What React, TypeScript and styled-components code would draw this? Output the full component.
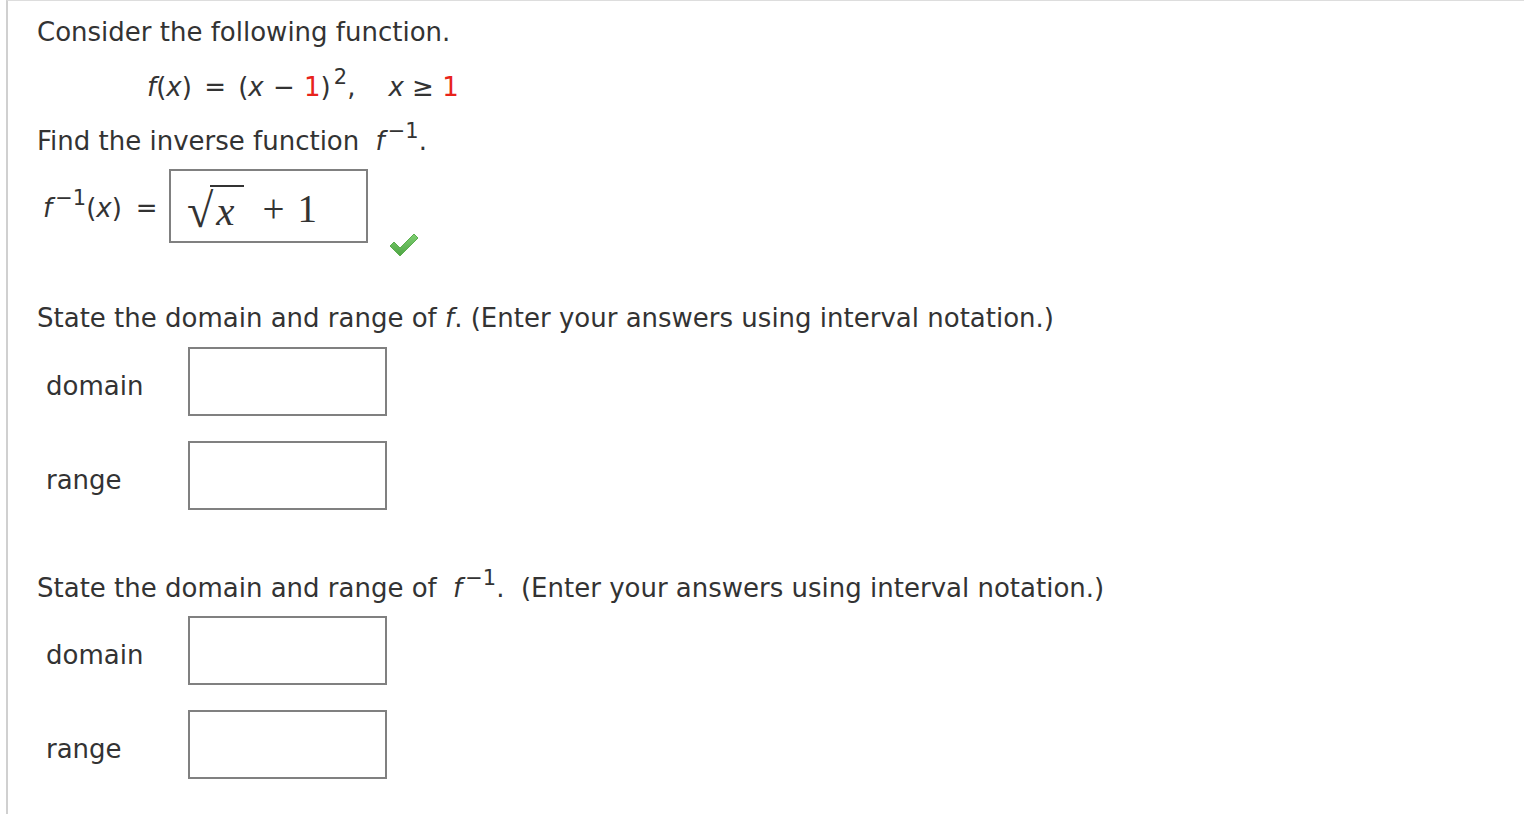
import React from 'react';
import styled, { createGlobalStyle } from 'styled-components';

const GlobalStyle = createGlobalStyle`
  html, body {
    margin: 0;
    padding: 0;
    background: #ffffff;
  }
  body {
    font-family: 'DejaVu Sans', Verdana, sans-serif;
    color: #333333;
  }
`;

const Frame = styled.div`
  margin-left: 6px;
  min-height: 814px;
  box-sizing: border-box;
  border-left: 2px solid #d0d0d0;
  border-top: 1px solid #dddddd;
  padding: 16px 0 0 29px;
`;

const Line = styled.div<{ $top?: number; $indent?: number }>`
  font-size: 26px;
  line-height: 30px;
  margin-top: ${(p) => p.$top ?? 0}px;
  padding-left: ${(p) => p.$indent ?? 0}px;
  white-space: nowrap;
`;

const It = styled.i`
  font-style: italic;
`;

const Red = styled.span`
  color: #e8231b;
`;

const Sup = styled.sup`
  font-size: 21px;
  line-height: 0;
  position: relative;
  top: -2px;
  margin-left: 3px;
  vertical-align: super;
`;

const Gap = styled.span<{ $w: number }>`
  display: inline-block;
  width: ${(p) => p.$w}px;
`;

const Sym = styled.span<{ $m: number }>`
  margin: 0 ${(p) => p.$m}px;
`;

const AnswerRow = styled.div`
  display: flex;
  align-items: flex-start;
  margin-top: 13px;
`;

const Lhs = styled.div`
  font-size: 26px;
  height: 73px;
  display: flex;
  align-items: center;
  padding: 5px 0 0 6px;
  box-sizing: border-box;
  width: 132px;
  white-space: nowrap;
`;

const MathBox = styled.div`
  width: 199px;
  height: 74px;
  box-sizing: border-box;
  border: 2px solid #808080;
  display: flex;
  align-items: center;
  padding: 4px 0 0 16px;
  font-family: 'Liberation Serif', 'DejaVu Serif', serif;
  font-size: 39px;
  color: #333333;
`;

const Radical = styled.span`
  display: inline-flex;
  align-items: flex-end;
`;

const RadSign = styled.span`
  font-size: 48px;
  line-height: 1;
  margin-bottom: -3px;
`;

const Radicand = styled.span`
  border-top: 2px solid #333333;
  font-style: italic;
  font-size: 41px;
  line-height: 1;
  padding: 4px 9px 0 6px;
  margin-left: -3px;
`;

const Op = styled.span`
  margin: 0 13px 0 19px;
`;

const Check = styled.svg`
  margin: 63px 0 0 20px;
`;

const FieldRow = styled.div<{ $top: number }>`
  display: flex;
  align-items: center;
  margin-top: ${(p) => p.$top}px;
`;

const FieldLabel = styled.div`
  font-size: 26px;
  width: 142px;
  padding: 8px 0 0 9px;
`;

const FieldBox = styled.div`
  width: 199px;
  height: 69px;
  box-sizing: border-box;
  border: 2px solid #808080;
  background: #ffffff;
`;

const FInv = ({ lead = 0 }: { lead?: number }) => (
  <span style={{ marginLeft: lead }}>
    <It>f</It>
    <Sup>−1</Sup>
  </span>
);

const Field = ({ label, top }: { label: string; top: number }) => (
  <FieldRow $top={top}>
    <FieldLabel>{label}</FieldLabel>
    <FieldBox />
  </FieldRow>
);

export default function App() {
  return (
    <>
      <GlobalStyle />
      <Frame>
        <Line>Consider the following function.</Line>
        <Line $top={25} $indent={110}>
          <It>f</It>(<It>x</It>) <Sym $m={4}>=</Sym> (<It>x</It> <Sym $m={1}>−</Sym> <Red>1</Red>)<Sup>2</Sup>,<Gap $w={33} />
          <It>x</It> ≥ <Red>1</Red>
        </Line>
        <Line $top={24}>
          Find the inverse function <FInv lead={8} />.
        </Line>
        <AnswerRow>
          <Lhs>
            <FInv />(<It>x</It>)<Gap $w={14} />=
          </Lhs>
          <MathBox>
            <Radical>
              <RadSign>√</RadSign>
              <Radicand>x</Radicand>
            </Radical>
            <Op>+</Op>
            <span>1</span>
          </MathBox>
          <Check width="32" height="26" viewBox="0 0 32 26">
            <defs>
              <linearGradient id="ck" x1="0" y1="0" x2="0" y2="1">
                <stop offset="0" stopColor="#7fcf72" />
                <stop offset="1" stopColor="#4ea544" />
              </linearGradient>
            </defs>
            <path
              d="M2 14 L6 10 L12 16 L26 2 L30 6 L12 24 Z"
              fill="url(#ck)"
              stroke="#5aae4e"
              strokeWidth="1"
              strokeLinejoin="round"
            />
          </Check>
        </AnswerRow>
        <Line $top={45}>
          State the domain and range of <It>f</It>. (Enter your answers using interval notation.)
        </Line>
        <Field label="domain" top={14} />
        <Field label="range" top={25} />
        <Line $top={63}>
          State the domain and range of <FInv lead={8} />.&nbsp; (Enter your answers using interval notation.)
        </Line>
        <Field label="domain" top={13} />
        <Field label="range" top={25} />
      </Frame>
    </>
  );
}
